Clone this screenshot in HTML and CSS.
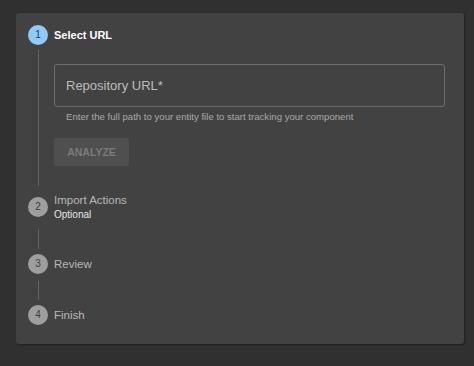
FILE: index.html
```html
<!DOCTYPE html>
<html lang="en">
<head>
  <meta charset="UTF-8" />
  <meta name="viewport" content="width=device-width, initial-scale=1.0"/>
  <title>Register Component</title>

  <link rel="stylesheet" href="styles.css">
</head>
<body>

  <div class="panel">

    <!-- Step 1 -->
    <div class="step-head">
      <div class="step-icon active">1</div>
      <div class="step-label active">Select URL</div>
    </div>
    <div class="step-content">
      <div class="field">
        <span class="field-label">Repository URL*</span>
      </div>
      <div class="helper">Enter the full path to your entity file to start tracking your component</div>
      <button class="btn" type="button" disabled>ANALYZE</button>
    </div>

    <!-- Step 2 -->
    <div class="step-head tall">
      <div class="step-icon">2</div>
      <div class="label-block">
        <div class="step-label">Import Actions</div>
        <div class="optional">Optional</div>
      </div>
    </div>
    <div class="connector first"></div>

    <!-- Step 3 -->
    <div class="step-head">
      <div class="step-icon">3</div>
      <div class="step-label">Review</div>
    </div>
    <div class="connector"></div>

    <!-- Step 4 -->
    <div class="step-head">
      <div class="step-icon">4</div>
      <div class="step-label">Finish</div>
    </div>

  </div>

</body>
</html>
```

FILE: styles.css
```css
body {
  margin: 0;
  padding: 13px 10px 0 16px;
  background: #303030;
  font-family: 'Liberation Sans', Arial, Helvetica, sans-serif;
  height: 366px;
  box-sizing: border-box;
  overflow: hidden;
}

.panel {
  width: 448px;
  height: 331px;
  box-sizing: border-box;
  background: #424242;
  border-radius: 3px;
  padding: 12px 12px 19px 12px;
  box-shadow: 1px 1px 2px rgba(0, 0, 0, 0.35);
}

.step-head {
  display: flex;
  align-items: center;
  height: 20px;
}

.step-head.tall {
  height: 28px;
}

.step-icon {
  width: 20px;
  height: 20px;
  border-radius: 50%;
  background: #9e9e9e;
  color: #3c3c3c;
  font-size: 10px;
  line-height: 20px;
  text-align: center;
  flex-shrink: 0;
}

.step-icon.active {
  background: #90caf9;
  color: #2d3a46;
}

.step-label {
  margin-left: 6px;
  font-size: 11.5px;
  line-height: 14px;
  color: #b8b8b8;
}

.step-label.active {
  font-size: 11px;
  font-weight: bold;
  color: #ffffff;
}

.label-block {
  display: flex;
  flex-direction: column;
}

.optional {
  margin-left: 6px;
  margin-top: 2px;
  font-size: 10px;
  line-height: 12px;
  color: #e6e6e6;
}

.step-content {
  margin: 5px 7px 7px 10px;
  border-left: 1px solid #646464;
  padding: 14px 0 20px 15px;
}

.field {
  height: 43px;
  box-sizing: border-box;
  border: 1px solid #6c6c6c;
  border-radius: 3px;
  display: flex;
  align-items: center;
  padding-left: 11px;
}

.field-label {
  font-size: 13px;
  line-height: 15px;
  color: #bdbdbd;
}

.helper {
  margin-top: 3px;
  padding-left: 12px;
  font-size: 9.6px;
  line-height: 14px;
  color: #a8a8a8;
}

.btn {
  margin-top: 14px;
  width: 75px;
  height: 28px;
  border: none;
  border-radius: 3px;
  background: #4f4f4f;
  color: #7b7b7b;
  font-family: inherit;
  font-size: 10.5px;
  font-weight: bold;
  padding: 0;
}

.connector {
  margin: 7px 0 5px 10px;
  height: 19px;
  border-left: 1px solid #646464;
}

.connector.first {
  margin-top: 8px;
  height: 20px;
}
```
